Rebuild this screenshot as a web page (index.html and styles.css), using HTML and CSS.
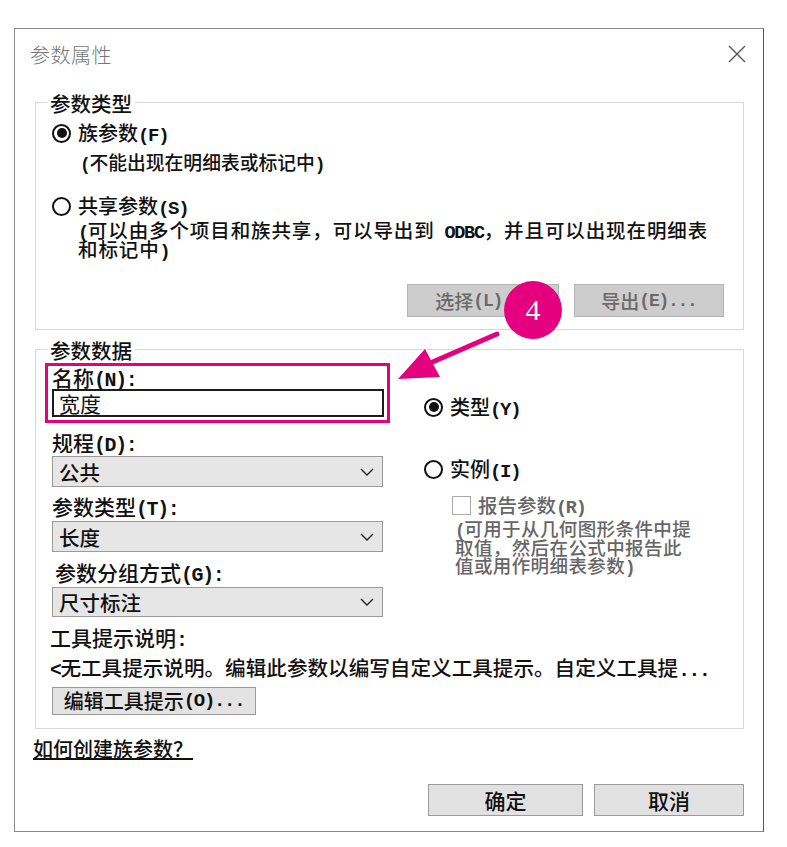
FILE: index.html
```html
<!DOCTYPE html>
<html lang="zh-CN">
<head>
<meta charset="utf-8">
<title>参数属性</title>
<link rel="stylesheet" href="styles.css">
</head>
<body>
<div class="dialog">
  <div class="titlebar">
    <span class="title">参数属性</span>
    <svg class="close" width="20" height="20" viewBox="0 0 20 20"><path d="M2 2L18 18M18 2L2 18" stroke="#555" stroke-width="1.4" fill="none"/></svg>
  </div>

  <div class="group g1">
    <span class="legend">参数类型</span>
    <div class="radio-row r1"><span class="radio on"></span><span>族参数<span class="lat">(F)</span></span></div>
    <div class="desc d1"><span class="lat">(</span>不能出现在明细表或标记中<span class="lat">)</span></div>
    <div class="radio-row r2"><span class="radio"></span><span>共享参数<span class="lat">(S)</span></span></div>
    <div class="desc d2"><div class="dl"><span class="lat">(</span>可以由多个项目和族共享，可以导出到<span class="lat"> ODBC</span>，并且可以出现在明细表</div><div class="dl">和标记中<span class="lat">)</span></div></div>
    <div class="btn-row">
      <button class="btn disabled b-sel">选择<span class="lat">(L)...</span></button>
      <button class="btn disabled b-exp">导出<span class="lat">(E)...</span></button>
    </div>
  </div>

  <div class="group g2">
    <span class="legend">参数数据</span>
    <div class="cols">
      <div class="left-col">
        <div class="namebox">
          <div class="label">名称<span class="lat">(N):</span></div>
          <div class="textbox">宽度</div>
        </div>
        <div class="label lf l-d">规程<span class="lat">(D):</span></div>
        <div class="select s1"><span>公共</span><svg width="14" height="8" viewBox="0 0 14 8"><path d="M1 1L7 7L13 1" stroke="#222" stroke-width="1.4" fill="none"/></svg></div>
        <div class="label lf l-t">参数类型<span class="lat">(T):</span></div>
        <div class="select s2"><span>长度</span><svg width="14" height="8" viewBox="0 0 14 8"><path d="M1 1L7 7L13 1" stroke="#222" stroke-width="1.4" fill="none"/></svg></div>
        <div class="label lf l-g">参数分组方式<span class="lat">(G):</span></div>
        <div class="select s3"><span>尺寸标注</span><svg width="14" height="8" viewBox="0 0 14 8"><path d="M1 1L7 7L13 1" stroke="#222" stroke-width="1.4" fill="none"/></svg></div>
      </div>
      <div class="right-col">
        <div class="radio-row rt"><span class="radio on"></span><span>类型<span class="lat">(Y)</span></span></div>
        <div class="radio-row ri"><span class="radio"></span><span>实例<span class="lat">(I)</span></span></div>
        <div class="check-row"><span class="checkbox"></span><span>报告参数<span class="lat">(R)</span></span></div>
        <div class="desc d3"><div class="dl"><span class="lat">(</span>可用于从几何图形条件中提</div><div class="dl">取值，然后在公式中报告此</div><div class="dl">值或用作明细表参数<span class="lat">)</span></div></div>
      </div>
    </div>
    <div class="label tip-label">工具提示说明<span class="lat">:</span></div>
    <div class="tip-text"><span class="lat">&lt;</span>无工具提示说明。编辑此参数以编写自定义工具提示。自定义工具提<span class="lat">...</span></div>
    <button class="btn b-tip">编辑工具提示<span class="lat">(O)...</span></button>
  </div>

  <a class="link" href="#">如何创建族参数？</a>

  <div class="footer">
    <button class="btn b-ok">确定</button>
    <button class="btn b-cancel">取消</button>
  </div>
</div>

<div class="callout">4</div>
<svg class="arrow" width="787" height="847" viewBox="0 0 787 847">
  <path d="M497 334L428 364" stroke="#e4007f" stroke-width="5" stroke-linecap="round" fill="none"/>
  <path d="M398 379L425 349L440 377Z" fill="#e4007f"/>
</svg>
</body>
</html>
```

FILE: styles.css
```css
html, body {
  margin: 0;
  padding: 0;
  background: #fff;
}

body {
  position: relative;
  width: 787px;
  height: 847px;
  overflow: hidden;
  font-family: "Noto Sans CJK SC", "Noto Sans", sans-serif;
  color: #111;
  font-weight: 500;
}

.lat {
  font-family: "Liberation Mono", "DejaVu Sans Mono", monospace;
  font-size: 0.95em;
  letter-spacing: -0.07em;
  font-weight: 700;
  line-height: 0;
}

.dialog {
  margin: 28px 0 0 14px;
  width: 750px;
  height: 804px;
  box-sizing: border-box;
  border: 1px solid #8a8a8a;
  border-right-color: #555;
}

.titlebar {
  display: flex;
  align-items: center;
  justify-content: space-between;
  height: 50px;
  padding: 0 16px 0 15px;
}

.title {
  font-size: 20px;
  font-weight: 300;
  color: #777;
  letter-spacing: 0.5px;
}

.group {
  border: 1px solid #d8d8d8;
  margin: 23px 19px 0 20px;
  padding: 0 19px 12px 16px;
}

.legend {
  display: block;
  width: max-content;
  margin: -11px 0 0 -5px;
  padding: 0 3px;
  background: #fff;
  line-height: 22px;
  height: 22px;
  font-size: 20.5px;
}

.radio-row {
  display: flex;
  align-items: center;
  gap: 7px;
  height: 22px;
  font-size: 20px;
  line-height: 22px;
  white-space: nowrap;
}

.radio {
  width: 19px;
  height: 19px;
  box-sizing: border-box;
  border: 2px solid #111;
  border-radius: 50%;
  display: flex;
  align-items: center;
  justify-content: center;
  flex: none;
}

.radio.on::after {
  content: "";
  width: 10px;
  height: 10px;
  border-radius: 50%;
  background: #111;
}

.r1 { margin-top: 8px; }
.r2 { margin-top: 23px; }

.desc { white-space: nowrap; }

.d1 {
  margin: 8px 0 0 28px;
  font-size: 18.8px;
  line-height: 20px;
  height: 20px;
}

.d2 {
  margin: 3px 0 0 26px;
  font-size: 19.5px;
  letter-spacing: 0.9px;
}

.d2 .dl {
  height: 19px;
  line-height: 19px;
}

.btn-row {
  display: flex;
  justify-content: flex-end;
  gap: 15px;
  margin-top: 26px;
}

.btn {
  font-family: inherit;
  font-weight: 500;
  font-size: 19px;
  line-height: 22px;
  color: #111;
  background: #e1e1e1;
  border: 1px solid #9a9a9a;
  padding: 0;
  margin: 0;
  box-sizing: border-box;
  display: flex;
  align-items: center;
  justify-content: center;
  white-space: nowrap;
}

.btn.disabled {
  background: #cdcdcd;
  border-color: #b4b4b4;
  color: #6a6a6a;
}

.b-sel { width: 152px; height: 33px; }
.b-exp { width: 150px; height: 33px; }

.g2 { margin-top: 19px; padding-bottom: 13px; }

.cols {
  display: flex;
  gap: 34px;
  margin-top: 2px;
}

.left-col {
  width: 345px;
  margin-left: -7px;
}

.namebox {
  border: 3px solid #e4007f;
  padding: 0 3px 3px 4px;
}

.label {
  font-size: 21px;
  line-height: 22px;
  height: 22px;
  white-space: nowrap;
}

.textbox {
  margin-top: 1px;
  height: 28px;
  box-sizing: border-box;
  border: 2px solid #1c1c1c;
  padding-left: 5px;
  font-size: 21px;
  line-height: 24px;
  font-weight: 400;
}

.lf { margin-left: 7px; }
.l-d { margin-top: 8px; }
.l-t { margin-top: 8px; }
.l-g { margin-top: 9px; margin-left: 10px; }

.select {
  margin-left: 7px;
  width: 331px;
  height: 31px;
  box-sizing: border-box;
  border: 1px solid #9a9a9a;
  background: #e6e6e6;
  display: flex;
  align-items: center;
  justify-content: space-between;
  padding: 0 8px 0 6px;
  font-size: 20.5px;
  line-height: 24px;
}

.s1 { margin-top: 3px; }
.s2 { margin-top: 4px; }
.s3 { margin-top: 4px; height: 30px; }

.right-col {
  display: flex;
  flex-direction: column;
}

.rt { margin-top: 33px; }
.ri { margin-top: 40px; }

.check-row {
  display: flex;
  align-items: center;
  gap: 7px;
  margin: 14px 0 0 28px;
  height: 22px;
  line-height: 22px;
  font-size: 19.5px;
  color: #666;
  white-space: nowrap;
}

.checkbox {
  width: 19px;
  height: 19px;
  box-sizing: border-box;
  border: 1px solid #aaa;
  background: #fff;
}

.d3 {
  margin: 3px 0 0 31px;
  font-size: 18.5px;
  letter-spacing: 0.4px;
  color: #666;
}

.d3 .dl {
  height: 18.7px;
  line-height: 18.7px;
}

.tip-label {
  margin: 9px 0 0 -2px;
}

.tip-text {
  margin: 8px 0 0 -2px;
  font-size: 20.6px;
  line-height: 22px;
  height: 22px;
  white-space: nowrap;
}

.b-tip {
  margin-top: 9px;
  width: 204px;
  height: 28px;
  background: #e3e3e3;
  border-color: #9a9a9a;
  font-size: 20px;
}

.link {
  display: block;
  width: max-content;
  margin: 9px 0 0 18px;
  font-size: 20px;
  line-height: 22px;
  color: #111;
  text-decoration: underline;
}

.footer {
  display: flex;
  justify-content: flex-end;
  gap: 11px;
  margin-top: 24px;
  padding-right: 19px;
}

.b-ok { width: 155px; height: 32px; font-size: 21px; }
.b-cancel { width: 150px; height: 32px; font-size: 21px; }

.callout {
  position: absolute;
  left: 504px;
  top: 281px;
  width: 58px;
  height: 58px;
  border-radius: 50%;
  background: #e4007f;
  color: #fff;
  font-family: "Liberation Serif", serif;
  font-weight: 400;
  font-size: 30px;
  display: flex;
  align-items: center;
  justify-content: center;
}

.arrow {
  position: absolute;
  left: 0;
  top: 0;
  pointer-events: none;
}
```
